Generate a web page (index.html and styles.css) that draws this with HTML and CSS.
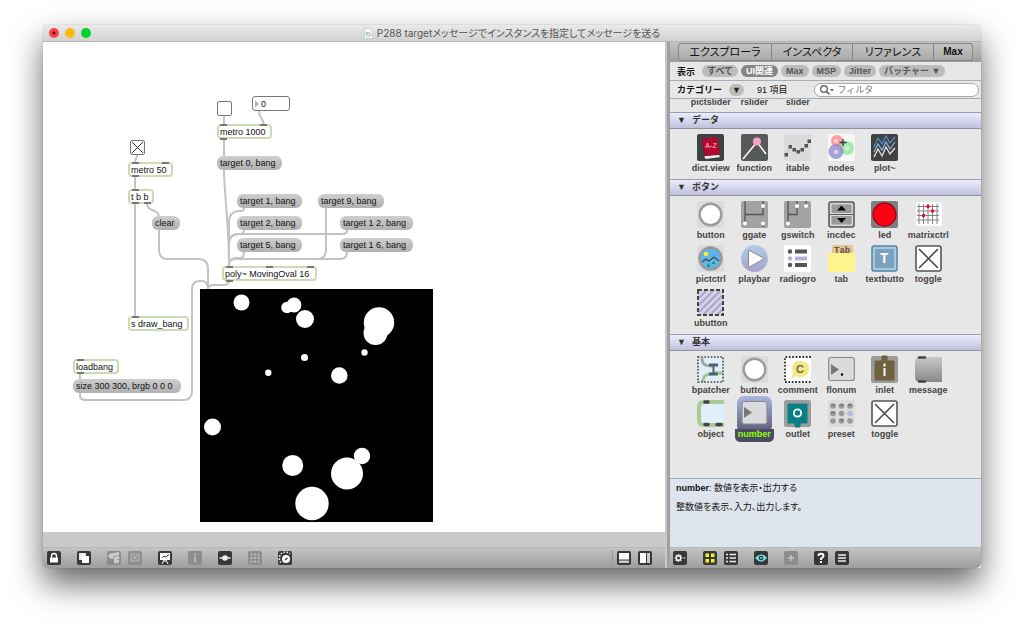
FILE: index.html
```html
<!DOCTYPE html>
<html lang="ja">
<head>
	<meta charset="utf-8">
	<link rel="stylesheet" href="styles.css">
	<title>P288 targetメッセージでインスタンスを指定してメッセージを送る</title>
</head>
<body>
	<div class="window">
		<div class="titlebar">
			<div class="lights">
				<button class="light red" aria-label="Close"></button>
				<button class="light yellow" aria-label="Minimize"></button>
				<button class="light green" aria-label="Zoom"></button>
			</div>
			<svg class="docIcon" viewBox="0 0 9 11"><path d="M.5.5h5l3 3v7h-8z" fill="#f6f6f6" stroke="#c4c4c4" stroke-width=".7"/><circle cx="4.500" cy="6.500" r="1.700" fill="none" stroke="#aaa" stroke-width="1"/><path d="M2 6l1-2" stroke="#4ab8d8"/><path d="M6 8l1-1" stroke="#e8b050"/></svg>
			<span>P288 targetメッセージでインスタンスを指定してメッセージを送る</span>
		</div>
		<div class="main">
			<div class="patcher">
				<div class="canvas">
					<svg class="layer cords" width="622" height="490">
						<path d="M181 74V84"/>
						<path d="M216 69C216 78 221 75 221 84"/>
						<path d="M181 97V116M181 128C181 150 186 180 186 225"/>
						<path d="M94 113C94 117 92 116 92 121M92 134V148M92 161V275"/>
						<path d="M104 161C104 171 116 166 116 175"/>
						<path d="M116 188V208Q116 217 125 217H155Q165 217 165 227V247"/>
						<path d="M201 166Q201 169 197 169H195Q186 170 186 180V225"/>
						<path d="M201 188Q201 192 197 192H196Q186 192 186 202V225"/>
						<path d="M304 188Q304 192 300 192H196Q186 192 186 202"/>
						<path d="M201 210Q201 216 197 216H193Q186 217 186 222"/>
						<path d="M304 210Q304 217 297 217H193Q186 217 186 222"/>
						<path d="M283 166V208Q283 217 274 217H193"/>
						<path d="M186 239Q186 243 180 243H171Q165 243 165 247"/>
						<path d="M37 331V338M37 351V354Q37 358 43 358H140Q149 358 149 349V247Q149 239 157 239H160Q165 240 165 247"/>
					</svg>
					<input type="checkbox" class="toggle toggleTarget" aria-label="metro 1000 toggle">
					<label class="numberBox"><svg viewBox="0 0 5 9"><path d="M0 0l5 4.500-5 4.500z" fill="#b0b0b0"/></svg><input type="text" value="0" aria-label="Interval"></label>
					<input type="checkbox" class="toggle toggleDraw" aria-label="metro 50 toggle" checked>
					<div class="object metro1000">metro 1000</div>
					<div class="object metro50">metro 50</div>
					<div class="object tbb">t b b</div>
					<div class="object poly">poly~ MovingOval 16</div>
					<div class="object sendDraw">s draw_bang</div>
					<div class="object loadbang">loadbang</div>
					<button class="message target0">target 0, bang</button>
					<button class="message target1">target 1, bang</button>
					<button class="message target2">target 2, bang</button>
					<button class="message target5">target 5, bang</button>
					<button class="message target9">target 9, bang</button>
					<button class="message target12">target 1 2, bang</button>
					<button class="message target16">target 1 6, bang</button>
					<button class="message clear">clear</button>
					<button class="message size">size 300 300, brgb 0 0 0</button>
					<svg class="layer ports" width="622" height="490">
						<path d="M177 83h7M217 83h7M177 97h7M89 121h7M119 121h7M89 134h7M89 148h7M89 161h7M101 161h7M183 225h7M223 225h7M264 225h7M183 239h7M89 275h7M34 318h7M34 331h7"/>
					</svg>
					<svg class="ovals" viewBox="0 0 233 233">
						<rect width="233" height="233"/>
						<g fill="#fff">
							<circle cx="41.500" cy="13.500" r="8"/><circle cx="87" cy="18.500" r="5.800"/><circle cx="94" cy="16" r="7.400"/><circle cx="105" cy="30" r="9"/>
							<circle cx="179" cy="33.500" r="15.200"/><circle cx="175.500" cy="44" r="12"/><circle cx="164.500" cy="63.500" r="3.200"/><circle cx="104.500" cy="68.500" r="3.500"/>
							<circle cx="68.300" cy="83.800" r="3.200"/><circle cx="139.300" cy="86.500" r="8.300"/><circle cx="12.500" cy="138" r="8.500"/><circle cx="92.700" cy="176.500" r="10.500"/>
							<circle cx="147" cy="184.500" r="16"/><circle cx="162" cy="167" r="8.200"/><circle cx="112" cy="214.500" r="16.700"/>
						</g>
					</svg>
				</div>
				<div class="scrollbar"></div>
				<div class="toolbar">
					<button class="tool" aria-label="Lock"><svg viewBox="0 0 14 14"><rect x="3" y="6.500" width="8" height="5" rx=".5" fill="#fff"/><path d="M4.500 7V5a2.500 2.500 0 0 1 5 0v2" fill="none" stroke="#fff" stroke-width="1.300"/></svg></button>
					<button class="tool gap" aria-label="New view"><svg viewBox="0 0 14 14"><rect x="2" y="2" width="7" height="7" fill="#e4ecec"/><rect x="5" y="5" width="7" height="7" fill="#fff"/></svg></button>
					<button class="tool gap dim" aria-label="Patch cords" disabled><svg viewBox="0 0 14 14"><path d="M2 4.500l10-2M2 4l4 3M7 8l5-2M7 11l5-1" stroke="#ccc" stroke-width="3"/></svg></button>
					<button class="tool near dim" aria-label="Close patcher" disabled><svg viewBox="0 0 14 14"><rect x="3" y="3" width="8" height="7" fill="none" stroke="#bbb"/><path d="M5 4.500l4 4M9 4.500l-4 4" stroke="#ccc"/></svg></button>
					<button class="tool gap" aria-label="Presentation"><svg viewBox="0 0 14 14"><rect x="2" y="2" width="10" height="7" fill="#fff"/><path d="M4 7l2-2 2 1 3-2.500" fill="none" stroke="#333"/><path d="M6 9l-2 4M8 9l2 4M7 9v2" stroke="#fff"/></svg></button>
					<button class="tool gap dim" aria-label="Info" disabled><svg viewBox="0 0 14 14"><path d="M7 2.500v2M7 5.500v6" stroke="#c4c4c4" stroke-width="1.500"/></svg></button>
					<button class="tool gap" aria-label="Probe"><svg viewBox="0 0 14 14"><path d="M1.500 7h11" stroke="#ddd" stroke-width="1.600"/><circle cx="7" cy="7" r="2.800" fill="#eee"/></svg></button>
					<button class="tool gap dim" aria-label="Grid" disabled><svg viewBox="0 0 14 14"><path d="M2.500 3.500h9M2.500 7h9M2.500 10.500h9" stroke="#bbb" stroke-width="2" stroke-dasharray="2 1.500"/></svg></button>
					<button class="tool gap" aria-label="Inspector dial"><svg viewBox="0 0 14 14"><circle cx="8" cy="8" r="4" fill="#fff"/><path d="M7 9l2.500-2" stroke="#333" stroke-width="1.200"/><path d="M3 11.500A6 6 0 0 1 12 3" fill="none" stroke="#eee" stroke-width="1.700" stroke-dasharray="1.500 1.500"/></svg></button>
					<span class="spring"></span>
					<span class="rule"></span>
					<button class="tool" aria-label="Bottom pane"><svg viewBox="0 0 14 14"><rect x="2" y="2" width="10" height="6.500" fill="#fff"/><rect x="2" y="9.500" width="10" height="2.500" fill="#ccc"/></svg></button>
					<button class="tool near" aria-label="Side pane"><svg viewBox="0 0 14 14"><rect x="2" y="2" width="6" height="10" fill="#fff"/><rect x="9" y="2" width="3" height="10" fill="#ccc"/></svg></button>
				</div>
			</div>
			<div class="splitter"></div>
			<div class="sidebar">
				<div class="tabs">
					<button class="explorerTab">エクスプローラ</button>
					<button class="inspectorTab">インスペクタ</button>
					<button class="referenceTab">リファレンス</button>
					<button class="maxTab">Max</button>
				</div>
				<div class="row">
					<span class="rowLabel">表示</span>
					<button class="chip">すべて</button>
					<button class="chip active">UI関連</button>
					<button class="chip">Max</button>
					<button class="chip">MSP</button>
					<button class="chip">Jitter</button>
					<button class="chip">パッチャー ▼</button>
				</div>
				<div class="row">
					<span class="rowLabel">カテゴリー</span>
					<button class="chip dropdown" aria-label="カテゴリー">▼</button>
					<span class="count">91 項目</span>
					<label class="search"><svg viewBox="0 0 16 12"><circle cx="5" cy="5" r="3.300" fill="none" stroke="#666" stroke-width="1.400"/><path d="M7.500 7.500l3 3" stroke="#666" stroke-width="1.700"/><path d="M11 5h4l-2 2.500z" fill="#666"/></svg><input type="text" placeholder="フィルタ" aria-label="フィルタ"></label>
				</div>
				<div class="browser">
					<div class="grid clipped"><span>pictslider</span><span>rslider</span><span>slider</span></div>

					<h2>▼<span>データ</span></h2>
					<div class="grid">
						<button class="item"><svg viewBox="0 0 27 27"><rect width="27" height="27" rx="2" fill="#404143"/><path d="M8 22l14-1 1 2-14 2-2-2z" fill="#eee"/><path d="M5 5l15-2 3 17-15 2z" fill="#b5062d"/><path d="M5 5l3 17v2L5 7z" fill="#80001c"/><text x="8" y="14" font-size="7" fill="#e89aa8" class="iconText">A-Z</text></svg>dict.view</button>
						<button class="item"><svg viewBox="0 0 27 27"><rect width="27" height="27" rx="2" fill="#57585a"/><path d="M2 25L16 8l9 12" fill="none" stroke="#fff" stroke-width="1.500"/><circle cx="16" cy="7.500" r="4" fill="#f2a4c6"/></svg>function</button>
						<button class="item"><svg viewBox="0 0 27 27"><rect width="27" height="27" rx="2" fill="#d9dbdd"/><path d="M2 21l4-8 4 3 4 2 4-2 4-4 3-4" fill="none" stroke="#aaa" stroke-width=".6"/><path d="M.5 19h3.500v3.500H.5zM4.500 11h3.500v3.500H4.500zM8.500 14h3.500v3.500H8.500zM12.500 16h3.500v3.500h-3.500zM16.500 14h3.500v3.500h-3.500zM20.500 10h3.500v3.500h-3.500zM23.500 5.500H27V9h-3.500z" fill="#555"/></svg>itable</button>
						<button class="item"><svg viewBox="0 0 27 27"><rect width="27" height="27" rx="2" fill="#f7f7f7"/><circle cx="9" cy="7" r="6" fill="#ff9c9c"/><circle cx="19" cy="14" r="7" fill="#8ee59c" fill-opacity=".8"/><circle cx="8" cy="17.500" r="7.500" fill="#8986cc" fill-opacity=".75"/><path d="M15 5v7M11.500 8.500h7" stroke="#333" stroke-width="1.300"/><circle cx="8" cy="7" r="1.800" fill="#fff"/><circle cx="19" cy="14" r="1.800" fill="#fff"/><circle cx="8" cy="18" r="1.800" fill="#fff"/><path d="M7.500 7h1M18.500 14h1M7.500 18h1" stroke="#666"/></svg>nodes</button>
						<button class="item"><svg viewBox="0 0 27 27"><rect width="27" height="27" rx="2" fill="#404143"/><g fill="none" stroke-width="1.200"><path d="M3 13l4-9 4 6 4-8 4 7 5-6" stroke="#4c92c4"/><path d="M3 18l4-8 4 6 4-8 4 7 5-7" stroke="#8bbce0"/><path d="M3 23l4-8 4 7 4-9 4 7 5-6" stroke="#eee"/></g></svg>plot~</button>
					</div>

					<h2>▼<span>ボタン</span></h2>
					<div class="grid">
						<button class="item"><svg viewBox="0 0 27 27"><rect width="27" height="27" rx="2" fill="#d9dbdd"/><circle cx="13.500" cy="13.500" r="10.800" fill="#fff" stroke="#9b9b9b" stroke-width="2.400"/></svg>button</button>
						<button class="item"><svg viewBox="0 0 27 27"><rect width="27" height="27" rx="2" fill="#a2a2a2"/><path d="M4 0v21M4 13.500h18V7M22 0v4M22 21v5" fill="none" stroke="#555" stroke-width="1.300"/><circle cx="22" cy="5" r="2" fill="#fff"/><circle cx="4" cy="22.500" r="2" fill="#fff"/><circle cx="22" cy="22.500" r="2" fill="#fff"/></svg>ggate</button>
						<button class="item"><svg viewBox="0 0 27 27"><rect width="27" height="27" rx="2" fill="#a2a2a2"/><path d="M4 0v21M4 13.500h9V7M13 0v4M22 0v4" fill="none" stroke="#555" stroke-width="1.300"/><circle cx="13" cy="5" r="2" fill="#fff"/><circle cx="22" cy="5" r="2" fill="#fff"/><circle cx="4" cy="22.500" r="2" fill="#fff"/></svg>gswitch</button>
						<button class="item"><svg viewBox="0 0 27 27"><rect x="1" y="1" width="25" height="25" rx="2" fill="#ccc" stroke="#555" stroke-width="1.500"/><path d="M3 3h21v9.500H3zM3 14.500h21V24H3z" fill="#999" stroke="#eee" stroke-width=".7"/><path d="M2 13.500h23" stroke="#555"/><path d="M9 9.500h9l-4.500-5zM9 17h9l-4.500 5z"/></svg>incdec</button>
						<button class="item"><svg viewBox="0 0 27 27"><rect width="27" height="27" rx="2" fill="#7c7e80"/><circle cx="13.500" cy="13.500" r="11.500" fill="#fb0015" stroke="#a00010" stroke-width="1.300"/></svg>led</button>
						<button class="item"><svg viewBox="0 0 27 27"><rect x="1" y="1" width="26" height="24" rx="2" fill="#fff"/><path d="M4 3v20M8.500 3v20M13 3v20M17.500 3v20M22 3v20M2 5.500h22M2 10h22M2 14.500h22M2 19h22" stroke="#777" stroke-width=".9"/><g fill="#f01"><circle cx="13" cy="5.500" r="1.800"/><circle cx="17.500" cy="10" r="1.800"/><circle cx="8.500" cy="14.500" r="1.800"/></g></svg>matrixctrl</button>
						<button class="item"><svg viewBox="0 0 27 27"><rect width="27" height="27" rx="2" fill="#d9dbdd"/><circle cx="13.500" cy="13.500" r="11" fill="#5cb4e8" stroke="#999" stroke-width="2.400"/><circle cx="9" cy="9" r="2.300" fill="#f8ec38"/><path d="M5 17l4-3 3 2 5-4 5 4" fill="none" stroke="#444" stroke-width="1.200"/><path d="M10 22l1.500-4 1.500 4zM15 19l1.500-3 1.500 3z" fill="#188548"/></svg>pictctrl</button>
						<button class="item"><svg viewBox="0 0 27 27"><defs><linearGradient id="play" x2="0" y2="1"><stop stop-color="#b0cdec"/><stop offset="1" stop-color="#a8a1cc"/></linearGradient></defs><circle cx="13.500" cy="13.500" r="13.500" fill="url(#play)"/><path d="M7.500 5v17.500L23.500 13.500z" fill="#fff" stroke="#888"/></svg>playbar</button>
						<button class="item"><svg viewBox="0 0 27 27"><rect width="27" height="27" rx="2" fill="#fff"/><path d="M11 6.500h12M11 20h12" stroke="#555" stroke-width="4"/><path d="M11 13.500h12" stroke="#b5b0d8" stroke-width="4"/><circle cx="6" cy="6.500" r="2.200" fill="#555"/><circle cx="6" cy="13.500" r="2.200" fill="#b5b0d8"/><circle cx="6" cy="20" r="2.200" fill="#555"/></svg>radiogro</button>
						<button class="item"><svg viewBox="0 0 27 27"><path d="M4 9V2q0-2 2-2h17q2 0 2 2v7z" fill="#e7c58d"/><path d="M0 8h27v19H0z" fill="#fff38e"/><text x="6" y="8" font-size="9" font-weight="700" fill="#555" class="iconMono">Tab</text></svg>tab</button>
						<button class="item"><svg viewBox="0 0 27 27"><rect x="1" y="1" width="25" height="25" rx="2" fill="#a6c8e0" stroke="#5785a7" stroke-width="1.500"/><rect x="4" y="4" width="19" height="19" fill="#7ba2bd"/><text x="9" y="18" font-size="14" font-weight="700" fill="#fff" class="iconMono">T</text></svg>textbutto</button>
						<button class="item"><svg viewBox="0 0 27 27"><rect x="1" y="1" width="25" height="25" rx="2" fill="#fff" stroke="#555" stroke-width="1.600"/><path d="M4 4l19 19M23 4L4 23" stroke="#444" stroke-width="1.500"/></svg>toggle</button>
						<button class="item"><svg viewBox="0 0 27 27"><rect x="1" y="1" width="25" height="25" fill="#d5d4e1"/><path d="M2 9l7-7M2 16L16 2M2 23L23 2M6 26L26 6M13 26l13-13M20 26l6-6" stroke="#aaa5d1" stroke-width="2"/><rect x="1" y="1" width="25" height="25" fill="none" stroke="#444" stroke-width="2" stroke-dasharray="4 2"/></svg>ubutton</button>
					</div>

					<h2>▼<span>基本</span></h2>
					<div class="grid">
						<button class="item"><svg viewBox="0 0 27 27"><rect x="1" y="1" width="25" height="25" fill="#e0eff8"/><path d="M5 2c0 8 5 8 12 8" fill="none" stroke="#97aaa9" stroke-width="3"/><path d="M6 26c0-9 5-7 13-9l7 0" fill="none" stroke="#9fc49a" stroke-width="3"/><path d="M12 9h9M12 18h9" stroke="#526272" stroke-width="3"/><path d="M16.500 9v9" stroke="#526272" stroke-width="2"/><rect x="1" y="1" width="25" height="25" fill="none" stroke="#444" stroke-width="1.600" stroke-dasharray="1.600 1.600"/></svg>bpatcher</button>
						<button class="item"><svg viewBox="0 0 27 27"><rect width="27" height="27" rx="2" fill="#d9dbdd"/><circle cx="13.500" cy="13.500" r="10.800" fill="#fff" stroke="#9b9b9b" stroke-width="2.400"/></svg>button</button>
						<button class="item"><svg viewBox="0 0 27 27"><rect width="27" height="27" fill="#fff"/><path d="M27 1H1v25h26" fill="none" stroke="#333" stroke-width="1.800" stroke-dasharray="1.800 1.600"/><path d="M7 23l2-6q-3-12 7-12 9 0 9 8 0 8-9 8-3 0-4-1z" fill="#f7e97f"/><text x="12" y="17" font-size="11" font-weight="700" fill="#666" class="iconText">C</text></svg>comment</button>
						<button class="item"><svg viewBox="0 0 27 27"><rect x=".7" y="1.500" width="25.600" height="23" rx="2" fill="#d9dbdd" stroke="#888" stroke-width="1.200"/><path d="M3 8v11l8-5.500z" fill="#777"/><circle cx="14" cy="18.500" r="1.200"/></svg>flonum</button>
						<button class="item"><svg viewBox="0 0 27 27"><rect width="27" height="27" rx="2" fill="#9b9b9b"/><path d="M11 0h5v5h7v19H4V5h7z" fill="#71613e" stroke="#71613e" stroke-linejoin="round"/><path d="M13.500 7.500v3M13.500 12v8" stroke="#fff" stroke-width="2"/></svg>inlet</button>
						<button class="item"><svg viewBox="0 0 27 27"><defs><linearGradient id="msg" x2="0" y2="1"><stop stop-color="#c8c8c8"/><stop offset="1" stop-color="#878889"/></linearGradient></defs><path d="M27 1H5Q0 1 0 6v15q0 5 5 5h22z" fill="url(#msg)"/><path d="M4 1.500h6M4 25.500h6" stroke="#444" stroke-width="2.500" stroke-linecap="round"/></svg>message</button>
						<button class="item"><svg viewBox="0 0 27 27"><path d="M27 2H7Q2 2 2 7v13q0 5 5 5h20z" fill="#e0eff9"/><path d="M27 2H7Q2 2 2 7v13q0 5 5 5h20" fill="none" stroke="#acca95" stroke-width="4"/><path d="M8 2h3M8 24.500h3M20 24.500h4" stroke="#444" stroke-width="3.500" stroke-linecap="round"/></svg>object</button>
						<button class="item selected"><svg viewBox="0 0 27 27"><defs><linearGradient id="sel" x2="0" y2="1"><stop stop-color="#aab6de"/><stop offset="1" stop-color="#5b5a7a"/></linearGradient></defs><rect x="-4" y="-4" width="35" height="37" rx="7" fill="url(#sel)"/><rect x="1" y="1.500" width="25" height="22.500" rx="2" fill="#d9dbdd" stroke="#888" stroke-width="1.200"/><path d="M3 7v11l8-5.500z" fill="#777"/></svg><span>number</span></button>
						<button class="item"><svg viewBox="0 0 27 27"><rect width="27" height="27" rx="2" fill="#9b9b9b"/><path d="M4 4h19v19h-7v4h-5v-4H4z" fill="#087e86" stroke="#087e86" stroke-linejoin="round"/><circle cx="13.500" cy="13" r="3.700" fill="none" stroke="#fff" stroke-width="1.800"/></svg>outlet</button>
						<button class="item"><svg viewBox="0 0 27 27"><rect width="27" height="27" rx="2" fill="#d9dbdd"/><g fill="#999"><circle cx="5" cy="6" r="2.800"/><circle cx="13.500" cy="6" r="2.800"/><circle cx="22" cy="6" r="2.800"/><circle cx="5" cy="13.500" r="2.800"/><circle cx="13.500" cy="13.500" r="2.800"/><circle cx="22" cy="13.500" r="2.800" fill="#b5b9df"/><circle cx="5" cy="21" r="2.800"/><circle cx="13.500" cy="21" r="2.800"/><circle cx="22" cy="21" r="2.800"/></g><path d="M3 5h4M11.500 5h4M20 5h4M3 12.500h4M11.500 20h4" stroke="#777" stroke-width="1.500"/></svg>preset</button>
						<button class="item"><svg viewBox="0 0 27 27"><rect x="1" y="1" width="25" height="25" rx="2" fill="#fff" stroke="#555" stroke-width="1.600"/><path d="M4 4l19 19M23 4L4 23" stroke="#444" stroke-width="1.500"/></svg>toggle</button>
					</div>
				</div>
				<div class="description">
					<p><b>number</b>: 数値を表示・出力する</p>
					<p>整数値を表示、入力、出力します。</p>
				</div>
				<div class="toolbar">
					<button class="tool" aria-label="Settings"><svg viewBox="0 0 14 14"><circle cx="5.500" cy="7" r="2.300" fill="none" stroke="#fff" stroke-width="1.500"/><path d="M5.500 3v1.500M5.500 9.500V11M1.500 7H3M8 7h1.500M2.700 4.200l1 1M7.300 8.800l1 1M2.700 9.800l1-1M7.300 5.200l1-1" stroke="#fff" stroke-width="1.200"/><path d="M10 6.500h3L11.500 8z" fill="#ccc"/></svg></button>
					<button class="tool gap" aria-label="Icon view"><svg viewBox="0 0 14 14"><path d="M2.500 2.500h3.500v3.500H2.500zM8 2.500h3.500v3.500H8zM2.500 8h3.500v3.500H2.500zM8 8h3.500v3.500H8z" fill="#f4f428"/></svg></button>
					<button class="tool near" aria-label="List view"><svg viewBox="0 0 14 14"><path d="M2 3.500h2M2 7h2M2 10.500h2M5.500 3.500H12M5.500 7H12M5.500 10.500H12" stroke="#eee" stroke-width="1.500"/></svg></button>
					<button class="tool gap" aria-label="Show help"><svg viewBox="0 0 14 14"><path d="M1 7q6-7 12 0-6 7-12 0z" fill="#6fe4e8"/><circle cx="7" cy="7" r="2.300" fill="#383838"/><circle cx="7" cy="7" r="1" fill="#6fe4e8"/></svg></button>
					<button class="tool gap dim" aria-label="Add" disabled><svg viewBox="0 0 14 14"><path d="M7 4v6M4 7h6" stroke="#c4c4c4" stroke-width="1.500"/></svg></button>
					<button class="tool gap" aria-label="Help"><svg viewBox="0 0 14 14"><path d="M4.500 5q0-2.300 2.500-2.300T9.500 5Q9.500 6.300 7 7.500V9" fill="none" stroke="#fff" stroke-width="1.900"/><path d="M6 10h2v2H6z" fill="#fff"/></svg></button>
					<button class="tool near" aria-label="Menu"><svg viewBox="0 0 14 14"><path d="M3 4h8M3 7h8M3 10h8" stroke="#eee" stroke-width="1.300"/></svg></button>
				</div>
			</div>
		</div>
	</div>
</body>
</html>
```
FILE: styles.css
```css
*{
	box-sizing: border-box;
}
body{
	margin: 0;
	min-height: 100vh;
	padding: 25px 43px 62px;
	display: flex;
	background-color: #fff;
	font-family: "Liberation Sans", "Noto Sans CJK JP", sans-serif;
	font-size: 9px;
	color: #111;
}
button, input{
	font: inherit;
	color: inherit;
	margin: 0;
	padding: 0;
	border: 0;
	background: none;
}
.window{
	flex: 1;
	min-width: 0;
	display: flex;
	flex-direction: column;
	border-radius: 5px;
	background-color: #fff;
	box-shadow: 0 0 1px rgba(0,0,0,.5), 0 16px 32px rgba(0,0,0,.6);
}
.titlebar{
	height: 17px;
	display: grid;
	grid-template-columns: 1fr auto auto 1fr;
	align-items: center;
	gap: 4px;
	border-radius: 5px 5px 0 0;
	border-bottom: 1px solid #b4b4b4;
	background: linear-gradient(#eaeaea, #d2d2d2);
	font-family: Inter, "Noto Sans CJK JP", sans-serif;
	font-size: 10px;
	line-height: 16px;
	font-feature-settings: "palt";
	white-space: nowrap;
	color: #555;
}
.lights{
	display: flex;
	gap: 6px;
	padding-left: 6px;
}
.light{
	width: 10px;
	height: 10px;
	border-radius: 50%;
}
.red{
	background: radial-gradient(circle, #600 0 1px, #fc4145 2px);
}
.yellow{
	background-color: #fdbb0a;
}
.green{
	background-color: #04d22c;
}
.docIcon{
	width: 9px;
	height: 11px;
}
.main{
	flex: 1;
	display: flex;
}
.patcher{
	flex: 1;
	min-width: 0;
	display: flex;
	flex-direction: column;
}

/* patch */
.canvas{
	flex: 1;
	position: relative;
	overflow: hidden;
}
.layer{
	position: absolute;
	left: 0;
	top: 0;
	fill: none;
	pointer-events: none;
}
.cords{
	stroke: #c3c3c3;
	stroke-width: 2;
}
.ports{
	stroke: #777;
	stroke-width: 2;
}
.object, .message{
	position: absolute;
	font-size: 9px;
	white-space: nowrap;
	text-align: left;
	color: #111;
}
.object{
	height: 15px;
	padding-left: 1px;
	line-height: 12px;
	border: 2px solid #cadbb5;
	border-radius: 4px;
	background-color: #fff;
}
.message{
	height: 14px;
	padding-left: 3px;
	line-height: 13px;
	border-radius: 6px;
	background: linear-gradient(#cecece, #b1b1b1);
}
.toggle{
	position: absolute;
	appearance: none;
	width: 15px;
	height: 15px;
	border: 1px solid #777;
	border-radius: 2px;
	background-color: #fff;
}
.toggle:checked{
	background-image: linear-gradient(45deg, transparent 47%, #333 47% 53%, transparent 53%), linear-gradient(-45deg, transparent 47%, #333 47% 53%, transparent 53%);
	background-size: 11px 11px;
	background-position: center;
	background-repeat: no-repeat;
}
.toggleTarget{ left: 174px; top: 59px; }
.toggleDraw{ left: 87px; top: 98px; }
.numberBox{
	position: absolute;
	left: 209px;
	top: 54px;
	width: 38px;
	height: 15px;
	padding-left: 2px;
	display: flex;
	align-items: center;
	gap: 2px;
	border: 1px solid #777;
	border-radius: 3px;
	background-color: #fff;
}
.numberBox svg{
	width: 4px;
	height: 8px;
}
.numberBox input{
	width: 20px;
}
.metro1000{ left: 174px; top: 82px; width: 55px; }
.metro50{ left: 85px; top: 120px; width: 45px; }
.tbb{ left: 85px; top: 147px; width: 26px; }
.poly{ left: 179px; top: 224px; width: 95px; }
.sendDraw{ left: 85px; top: 274px; width: 61px; }
.loadbang{ left: 30px; top: 317px; width: 46px; }
.target0{ left: 174px; top: 114px; width: 65px; }
.target1{ left: 194px; top: 152px; width: 65px; }
.target2{ left: 194px; top: 174px; width: 65px; }
.target5{ left: 194px; top: 196px; width: 65px; }
.target9{ left: 275px; top: 152px; width: 66px; }
.target12{ left: 297px; top: 174px; width: 73px; }
.target16{ left: 297px; top: 196px; width: 73px; }
.clear{ left: 109px; top: 174px; width: 28px; }
.size{ left: 30px; top: 337px; width: 108px; }
.ovals{
	position: absolute;
	left: 157px;
	top: 247px;
	width: 233px;
	height: 233px;
}
.scrollbar{
	height: 15px;
	background-color: #c9c9c9;
}

/* toolbars */
.toolbar{
	height: 21px;
	padding: 0 3px;
	display: flex;
	align-items: center;
	border-top: 1px solid #b8b8b8;
	background: linear-gradient(#c3c3c3, #9d9d9d);
}
.patcher .toolbar{
	padding: 0 13px 0 4px;
	border-radius: 0 0 0 5px;
}
.sidebar .toolbar{
	border-radius: 0 0 5px 0;
}
.tool{
	width: 14px;
	height: 14px;
	border-radius: 2px;
	background-color: #383838;
}
.tool svg{
	display: block;
}
.gap{
	margin-left: 16px;
}
.near{
	margin-left: 7px;
}
.dim{
	background-color: #8d8d8d;
}
.spring{
	flex: 1;
}
.rule{
	height: 16px;
	margin-right: 4px;
	border-left: 1px solid #999;
}
.splitter{
	width: 5px;
	border-left: 2px solid #c8c8c8;
	background-color: #a0a0a0;
}

/* sidebar */
.sidebar{
	width: 311px;
	display: flex;
	flex-direction: column;
	background-color: #e7e7e7;
}
.tabs{
	height: 20px;
	padding: 1px 8px;
	display: flex;
	background: linear-gradient(#c4c4c4, #9e9e9e);
}
.tabs button{
	flex: 80 1 0;
	border: 1px solid #858585;
	border-left-width: 0;
	background: linear-gradient(#c3c3c3, #aaa);
	font-size: 11px;
	line-height: 16px;
	font-feature-settings: "palt";
	white-space: nowrap;
}
.tabs .explorerTab{
	flex-grow: 92;
	border-left-width: 1px;
	border-radius: 3px 0 0 3px;
}
.tabs .maxTab{
	flex-grow: 38;
	border-radius: 0 3px 3px 0;
	font-size: 10px;
	font-weight: 700;
}
.row{
	height: 19px;
	padding-left: 7px;
	display: flex;
	align-items: center;
	gap: 3px;
	border-bottom: 1px solid #a5adb5;
	white-space: nowrap;
}
.row + .row{
	height: 18px;
}
.rowLabel{
	margin-right: 4px;
	font-weight: 700;
}
.chip{
	height: 12px;
	padding: 0 5px;
	border-radius: 6px;
	background-color: #bcbcbc;
	line-height: 12px;
	font-weight: 700;
	color: #555;
}
.active{
	background-color: #858585;
	color: #fff;
}
.dropdown{
	width: 15px;
	padding: 0;
	color: #222;
}
.count{
	margin-left: 10px;
}
.search{
	flex: 1;
	height: 14px;
	margin: 0 2px 0 23px;
	padding-left: 4px;
	display: flex;
	align-items: center;
	gap: 3px;
	border: 1px solid #aaa;
	border-radius: 7px;
	background-color: #fff;
}
.search svg{
	width: 16px;
	height: 12px;
}
.search input{
	width: 100px;
	height: 12px;
	line-height: 12px;
	outline: none;
}
.search input::placeholder{
	color: #777;
}
.browser{
	flex: 1;
	overflow: hidden;
}
.browser h2{
	height: 17px;
	margin: 0;
	padding-left: 7px;
	display: flex;
	align-items: center;
	gap: 6px;
	border-top: 1px solid #9c9ca4;
	border-bottom: 1px solid #9090a0;
	background: linear-gradient(#ececff, #c0c0dc);
	font-size: 9px;
	line-height: 15px;
	font-weight: 700;
	color: #333;
}
.grid{
	display: grid;
	grid-template-columns: repeat(6, 1fr);
	grid-auto-rows: 44px;
	padding: 5px 31px 1px 19px;
}
.item, .clipped{
	font-weight: 700;
	color: #444;
	line-height: 11px;
	text-align: center;
}
.item{
	min-width: 0;
	display: flex;
	flex-direction: column;
	align-items: center;
	gap: 2px;
	white-space: nowrap;
}
.item svg{
	width: 27px;
	height: 27px;
	flex: none;
	overflow: visible;
}
.clipped{
	height: 13px;
	padding-top: 0;
	padding-bottom: 4px;
	grid-auto-rows: 11px;
	align-content: end;
	overflow: hidden;
}
.selected span{
	position: relative;
	padding: 0 3px 2px;
	border-radius: 0 0 5px 5px;
	background-color: #4d4b62;
	color: #8cff00;
}
.iconText{
	font-family: "Liberation Sans", sans-serif;
}
.iconMono{
	font-family: "Liberation Mono", monospace;
}
.description{
	height: 69px;
	padding: 3px 6px;
	border-top: 1px solid #9aabb8;
	background-color: #dde4ec;
	font-feature-settings: "palt";
}
.description p{
	margin: 0 0 7px;
	line-height: 12px;
}
```
